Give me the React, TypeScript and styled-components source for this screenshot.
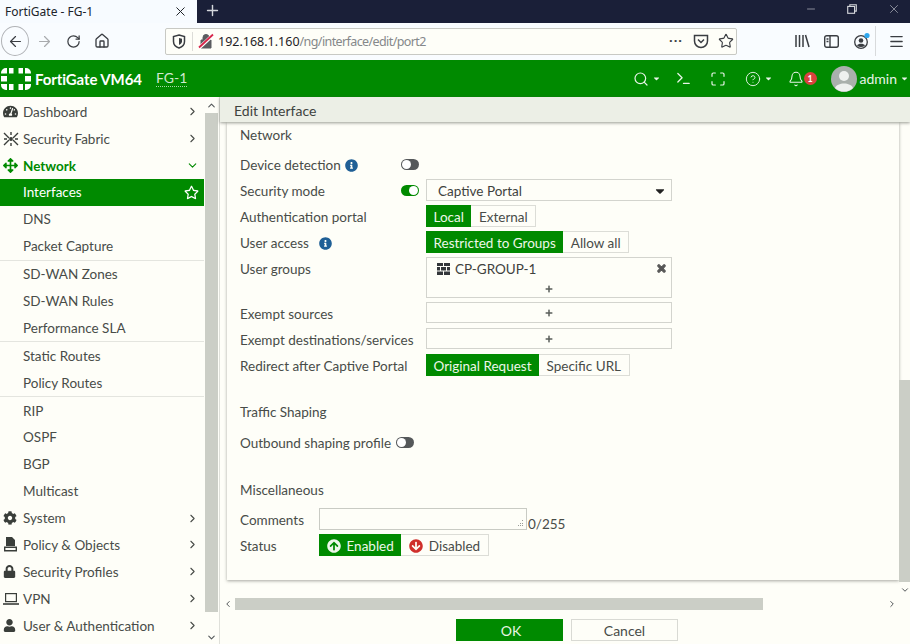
import React from 'react';
import styled, { createGlobalStyle } from 'styled-components';
import { ArrowLeft, ArrowRight, RotateCw, Home, Star, Search, Maximize, CircleHelp, Bell, X, Plus, Minus, Menu, ChevronRight, ChevronDown, ChevronUp, ChevronLeft, Terminal } from 'lucide-react';
import { FaTachometerAlt, FaArrowsAlt, FaCog, FaLock, FaUser, FaInfoCircle, FaArrowCircleUp, FaArrowCircleDown, FaTimes, FaPlus, FaCaretDown, FaRegStar } from 'react-icons/fa';

const GREEN = '#008a00';
const TEXT = '#484c48';
const PAPER = '#fefef8';
const THUMB = '#cbcec6';

const Global = createGlobalStyle`
  html, body { margin: 0; padding: 0; background: ${PAPER}; }
  body { font-family: Lato, "Liberation Sans", sans-serif; font-size: 13.5px; color: ${TEXT}; }
  * { box-sizing: border-box; }
`;

const Page = styled.div`
  width: 910px;
  height: 644px;
  overflow: hidden;
  display: flex;
  flex-direction: column;
`;

/* browser chrome */
const TabStrip = styled.div`
  height: 23px;
  background: #1a1f38;
  display: flex;
  align-items: stretch;
  flex: none;
`;
const Tab = styled.div`
  width: 197px;
  background: #f7fbff;
  display: flex;
  align-items: center;
  justify-content: space-between;
  padding: 0 9px 0 5px;
  font: 12px "Noto Sans", "Liberation Sans", sans-serif;
  color: #20242a;
`;
const NewTab = styled.div`
  width: 30px;
  display: flex;
  align-items: center;
  justify-content: center;
  color: #d5d7dc;
  margin-top: -3px;
`;
const WindowButtons = styled.div`
  margin-left: auto;
  display: flex;
  align-items: center;
  gap: 29px;
  padding: 0 9px 5px 0;
  color: #d5d7dc;
`;
const RestoreIcon = styled.svg`
  width: 12px;
  height: 12px;
`;
const Toolbar = styled.div`
  height: 37px;
  flex: none;
  background: #f9fcff;
  display: flex;
  align-items: center;
  color: #3a3d42;
  padding-bottom: 1px;
`;
const BackRound = styled.div`
  width: 28px;
  height: 30px;
  margin-left: 1px;
  border: 1px solid #b0b2b6;
  border-radius: 50%;
  display: flex;
  align-items: center;
  justify-content: center;
`;
const NavIcons = styled.div`
  display: flex;
  align-items: center;
  gap: 13px;
  margin-left: 7px;
  width: 129px;
`;
const UrlBar = styled.div`
  width: 572px;
  height: 27px;
  background: ${PAPER};
  border: 1px solid #c8c9c4;
  border-radius: 2px;
  display: flex;
  align-items: center;
  padding: 0 2px 0 6px;
  font: 12.5px "Noto Sans", "Liberation Sans", sans-serif;
`;
const UrlDivider = styled.span`
  width: 1px;
  height: 19px;
  background: #dcdcd8;
  margin: 0 5px 0 6px;
`;
const UrlHost = styled.span`
  color: #1f2226;
  margin-left: 4px;
`;
const UrlPath = styled.span`
  color: #85888a;
  letter-spacing: -0.6px;
`;
const UrlRight = styled.div`
  margin-left: auto;
  display: flex;
  align-items: center;
  gap: 9px;
  padding-right: 0;
`;
const Dots = styled.span`
  font-weight: 700;
  letter-spacing: 1px;
  font-size: 13px;
  line-height: 13px;
  margin-top: -8px;
  margin-right: 1px;
`;
const ToolRight = styled.div`
  margin-left: auto;
  display: flex;
  align-items: center;
  gap: 14px;
  padding-right: 5px;
`;
const ToolDivider = styled.span`
  width: 1px;
  height: 30px;
  background: #d8dadc;
  margin: 0 -2px 0 -10px;
`;

/* green app header */
const Header = styled.header`
  height: 37px;
  flex: none;
  background: ${GREEN};
  color: #fff;
  display: flex;
  align-items: center;
  padding: 0 1px 0 1px;
`;
const Brand = styled.span`
  font-weight: 700;
  font-size: 15px;
  margin-left: 4px;
  letter-spacing: -0.1px;
`;
const Host = styled.span`
  margin-left: 14px;
  font-size: 14px;
  color: #cfe8cf;
  border-bottom: 1px dotted #a8d8a8;
  line-height: 16px;
`;
const HeadRight = styled.div`
  margin-left: auto;
  display: flex;
  align-items: center;
  color: #e8f4e8;
`;
const Caret = styled(FaCaretDown)`
  width: 9px;
  height: 9px;
`;
const HeadItem = styled.span<{ $left: number }>`
  display: flex;
  align-items: center;
  margin-left: ${p => p.$left}px;
  gap: 3px;
`;
const Badge = styled.span`
  width: 13px;
  height: 13px;
  border-radius: 50%;
  background: #d9423f;
  color: #fff;
  font-size: 9px;
  font-weight: 700;
  display: flex;
  align-items: center;
  justify-content: center;
  margin-left: -3px;
`;
const Avatar = styled.svg`
  width: 26px;
  height: 26px;
`;
const AdminName = styled.span`
  font-size: 14px;
  color: #e8f4e8;
`;

/* body */
const Body = styled.div`
  flex: 1;
  min-height: 0;
  display: flex;
`;
const Side = styled.nav`
  width: 204px;
  flex: none;
  padding-top: 1.3px;
  overflow: hidden;
`;
const NavRow = styled.div<{ $active?: boolean; $current?: boolean }>`
  height: 26.9px;
  display: flex;
  align-items: center;
  padding-right: 5px;
  background: ${p => (p.$active ? GREEN : 'transparent')};
  color: ${p => (p.$active ? '#fff' : p.$current ? GREEN : TEXT)};
  font-weight: ${p => (p.$current ? 700 : 400)};
`;
const NavIcon = styled.span`
  width: 23px;
  padding-left: 3px;
  display: flex;
  align-items: center;
  flex: none;
`;
const NavEnd = styled.span`
  margin-left: auto;
  display: flex;
  align-items: center;
`;
const NavRule = styled.div`
  height: 1px;
  background: #e4e5df;
`;
const VBar = styled.div<{ $w: number }>`
  width: ${p => p.$w}px;
  flex: none;
  display: flex;
  flex-direction: column;
  align-items: center;
  color: #54585a;
`;
const ArrowSlot = styled.div<{ $h: number }>`
  height: ${p => p.$h}px;
  display: flex;
  align-items: center;
  justify-content: center;
  flex: none;
`;
const Thumb = styled.div<{ $h: number; $top?: number }>`
  height: ${p => p.$h}px;
  width: 100%;
  background: ${THUMB};
  margin-top: ${p => p.$top ?? 0}px;
  flex: none;
`;
const SideBarWrap = styled(VBar)`
  padding: 0 1px;
  border-right: 1px solid #dfe0da;
`;
const Main = styled.main`
  flex: 1;
  min-width: 0;
  display: flex;
  flex-direction: column;
`;
const TitleBar = styled.div`
  height: 25px;
  flex: none;
  background: #ecefe6;
  box-shadow: 0 1px 3px rgba(70, 72, 64, 0.55);
  padding: 5px 0 0 14px;
  font-size: 14px;
  color: #3e423e;
  position: relative;
`;
const Middle = styled.div`
  height: 476px;
  flex: none;
  display: flex;
`;
const CardSlot = styled.div`
  flex: 1;
  padding-left: 7px;
  min-width: 0;
`;
const Card = styled.div`
  height: 458px;
  background: ${PAPER};
  box-shadow: 0 1px 3px rgba(80, 82, 74, 0.5);
  padding-left: 13px;
  padding-top: 4px;
`;
const Heading = styled.div<{ $top?: number }>`
  height: 18px;
  line-height: 18px;
  margin-top: ${p => p.$top ?? 0}px;
`;
const FormRow = styled.div<{ $h?: number; $top?: number }>`
  display: flex;
  align-items: flex-start;
  height: ${p => p.$h ?? 26}px;
  margin-top: ${p => p.$top ?? 0}px;
`;
const Label = styled.div<{ $w?: number }>`
  width: ${p => (p.$w ? `${p.$w}px` : 'auto')};
  flex: none;
  display: flex;
  align-items: center;
  gap: 4px;
  height: 22px;
  padding-top: 2px;
  white-space: nowrap;
`;
const Info = styled(FaInfoCircle)`
  color: #1f5f96;
  width: 13px;
  height: 13px;
  flex: none;
`;
const Toggle = styled.span<{ $on?: boolean }>`
  width: 18px;
  height: 11px;
  border-radius: 6px;
  background: ${p => (p.$on ? GREEN : '#55585a')};
  display: inline-flex;
  align-items: center;
  justify-content: ${p => (p.$on ? 'flex-end' : 'flex-start')};
  padding: 0 1px;
  flex: none;
`;
const Knob = styled.span`
  width: 9px;
  height: 9px;
  border-radius: 50%;
  background: #fff;
`;
const ToggleCell = styled.div<{ $left?: number }>`
  width: ${p => (p.$left ? 'auto' : '25px')};
  margin-left: ${p => p.$left ?? 0}px;
  height: 22px;
  display: flex;
  align-items: center;
  flex: none;
`;
const Select = styled.div`
  width: 246px;
  height: 22px;
  border: 1px solid #d3d4ce;
  background: ${PAPER};
  display: flex;
  align-items: center;
  justify-content: space-between;
  padding: 1px 4px 0 11px;
  color: #3e423e;
`;
const Segments = styled.div`
  display: inline-flex;
  height: 22px;
  border: 1px solid #dcddd7;
`;
const Segment = styled.span<{ $on?: boolean }>`
  display: flex;
  align-items: center;
  gap: 6px;
  padding: 1px 7.5px 0;
  margin: ${p => (p.$on ? '-1px 0 -1px -1px' : 0)};
  background: ${p => (p.$on ? GREEN : PAPER)};
  color: ${p => (p.$on ? '#eef7ea' : TEXT)};
`;
const AddBox = styled.div<{ $h?: number }>`
  width: 246px;
  height: ${p => p.$h ?? 21}px;
  border: 1px solid #d3d4ce;
  display: flex;
  flex-direction: column;
  align-items: center;
  justify-content: center;
  color: #5a5e5a;
`;
const GroupEntry = styled.div`
  width: 100%;
  display: flex;
  align-items: center;
  height: 20px;
  padding: 0 4px 0 10px;
  color: #3e423e;
  gap: 5px;
`;
const BrickIcon = styled.svg`
  width: 13px;
  height: 12px;
  flex: none;
`;
const Remove = styled(FaTimes)`
  margin-left: auto;
  width: 11px;
  height: 11px;
  color: #555;
  stroke: currentColor;
  stroke-width: 50;
`;
const PlusSmall = styled(FaPlus)`
  width: 8px;
  height: 8px;
`;
const GroupPlus = styled.div`
  height: 15px;
  display: flex;
  align-items: center;
  justify-content: center;
  margin-top: 3px;
`;
const Comment = styled.div`
  width: 208px;
  height: 22px;
  border: 1px solid #c9cbc4;
  display: flex;
  align-items: flex-end;
  justify-content: flex-end;
  padding: 0 2px 2px 0;
`;
const Grip = styled.svg`
  width: 7px;
  height: 7px;
`;
const Counter = styled.span`
  margin: 8px 0 0 1px;
`;
const HBarRow = styled.div`
  height: 12px;
  margin-top: 0;
  flex: none;
  display: flex;
  align-items: center;
  color: #54585a;
`;
const HArrow = styled.div`
  width: 15px;
  display: flex;
  justify-content: center;
  flex: none;
`;
const HThumb = styled.div`
  width: 528px;
  height: 12px;
  background: ${THUMB};
`;
const HEnd = styled(HArrow)`
  margin-left: 121px;
`;
const Footer = styled.div`
  flex: none;
  display: flex;
  gap: 8px;
  padding: 9px 0 0 236px;
`;
const Primary = styled.div`
  width: 107px;
  height: 22px;
  background: ${GREEN};
  color: #e9f5e5;
  font-size: 14px;
  padding-left: 3px;
  display: flex;
  align-items: center;
  justify-content: center;
`;
const Secondary = styled(Primary)`
  background: ${PAPER};
  color: ${TEXT};
  border: 1px solid #d9dad4;
  padding-left: 0;
`;

/* inline drawings */
const FortiLogo = () => (
  <svg width="30" height="22" viewBox="0 0 30 22" fill="#fff">
    <path d="M8 0h4.500v5.500H8zM17.500 0H22v5.500h-4.500zM24 0h1a5 5 0 0 1 5 5v.5h-6zM6 0v5.500H0V5a5 5 0 0 1 5-5z" />
    <path d="M0 8h6v5.500H0zM24 8h6v5.500h-6z" />
    <path d="M0 16h6v6H5a5 5 0 0 1-5-5zM8 16h4.500v6H8zM17.500 16H22v6h-4.500zM24 16h6v1a5 5 0 0 1-5 5h-1z" />
  </svg>
);
const FabricIcon = () => (
  <svg width="16" height="16" viewBox="0 0 16 16" fill="none" stroke="#3a3e3a" strokeWidth="1.4">
    <path d="M1 2l5 5M15 2l-5 5M1 14l5-5M15 14l-5-5M8 1v3M8 12v3M1 8h3M12 8h3" />
    <circle cx="8" cy="8" r="1.2" fill="#3a3e3a" />
  </svg>
);
const PolicyIcon = () => (
  <svg width="15" height="15" viewBox="0 0 15 15" fill="#3a3e3a">
    <path d="M3 0h6l3 3v6H3zM1 9.500h13v5H1zM2.400 11v2h10.200v-2z" fillRule="evenodd" />
  </svg>
);
const LaptopIcon = () => (
  <svg width="16" height="14" viewBox="0 0 16 14" fill="none" stroke="#3a3e3a" strokeWidth="1.2">
    <rect x="2.600" y="1.600" width="10.800" height="8" />
    <path d="M0 12h16" strokeWidth="1.600" />
  </svg>
);
const PocketIcon = () => (
  <svg width="16" height="16" viewBox="0 0 16 16" fill="none" stroke="#3a3d42" strokeWidth="1.5">
    <path d="M1.500 2.500h13v5.500a6.500 6.500 0 0 1-13 0z" />
    <path d="M5 6.500l3 3 3-3" />
  </svg>
);
const ShieldIcon = () => (
  <svg width="14" height="15" viewBox="0 0 14 15" fill="none" stroke="#3a3d42" strokeWidth="1.5">
    <path d="M7 1l5.500 1.500v5c0 3-2.500 5.500-5.500 6.500-3-1-5.500-3.500-5.500-6.500v-5z" />
    <path d="M7 4l3 .8v2.700c0 1.500-1.300 2.800-3 3.500z" fill="#3a3d42" stroke="none" />
  </svg>
);
const InsecureIcon = () => (
  <svg width="16" height="16" viewBox="0 0 16 16">
    <path d="M3 7h10v8H3zM5 7V4.500a3 3 0 0 1 6 0V7" fill="#5a5c60" stroke="#5a5c60" strokeWidth="1" />
    <path d="M1 15L15 2" stroke="#fff" strokeWidth="3.500" />
    <path d="M1 14.500L15 1.500" stroke="#d7264a" strokeWidth="1.800" />
  </svg>
);
const LibraryIcon = () => (
  <svg width="15" height="14" viewBox="0 0 15 14" fill="none" stroke="#3a3d42" strokeWidth="1.500">
    <path d="M1 1v12M4.500 1v12M8 1v12M10.500 1l3.500 12" />
  </svg>
);
const SidebarIcon = () => (
  <svg width="15" height="13" viewBox="0 0 15 13" fill="none" stroke="#3a3d42" strokeWidth="1.400">
    <rect x="0.700" y="0.700" width="13.600" height="11.600" rx="2" />
    <path d="M6 1v11M2.500 4h2M2.500 6.500h2" />
  </svg>
);
const AccountIcon = () => (
  <svg width="18" height="18" viewBox="0 0 18 18">
    <circle cx="8" cy="10" r="6.300" fill="none" stroke="#3a3d42" strokeWidth="1.300" />
    <circle cx="8" cy="8.500" r="2.300" fill="#3a3d42" />
    <path d="M4 13.500c1-2.500 7-2.500 8 0a6 6 0 0 1-8 0z" fill="#3a3d42" />
    <circle cx="14" cy="3.500" r="2.600" fill="#2fa8f0" />
  </svg>
);

type Item = { label: string; icon?: React.ReactNode; end?: 'right' | 'down' | 'star'; active?: boolean; current?: boolean; rule?: boolean };

const dark = { color: '#3a3e3a' };
const nav: Item[] = [
  { label: 'Dashboard', icon: <FaTachometerAlt size={15} style={dark} />, end: 'right' },
  { label: 'Security Fabric', icon: <FabricIcon />, end: 'right' },
  { label: 'Network', icon: <FaArrowsAlt size={15} />, end: 'down', current: true },
  { label: 'Interfaces', end: 'star', active: true },
  { label: 'DNS' },
  { label: 'Packet Capture', rule: true },
  { label: 'SD-WAN Zones' },
  { label: 'SD-WAN Rules' },
  { label: 'Performance SLA', rule: true },
  { label: 'Static Routes' },
  { label: 'Policy Routes', rule: true },
  { label: 'RIP' },
  { label: 'OSPF' },
  { label: 'BGP' },
  { label: 'Multicast' },
  { label: 'System', icon: <FaCog size={14} style={dark} />, end: 'right' },
  { label: 'Policy & Objects', icon: <PolicyIcon />, end: 'right' },
  { label: 'Security Profiles', icon: <FaLock size={13} style={dark} />, end: 'right' },
  { label: 'VPN', icon: <LaptopIcon />, end: 'right' },
  { label: 'User & Authentication', icon: <FaUser size={13} style={dark} />, end: 'right' },
];

function NavEntry({ item }: { item: Item }) {
  return (
    <>
      <NavRow $active={item.active} $current={item.current}>
        <NavIcon>{item.icon}</NavIcon>
        {item.label}
        <NavEnd>
          {item.end === 'right' && <ChevronRight size={13} strokeWidth={2} />}
          {item.end === 'down' && <ChevronDown size={13} strokeWidth={2} />}
          {item.end === 'star' && <FaRegStar size={15} />}
        </NavEnd>
      </NavRow>
      {item.rule && <NavRule />}
    </>
  );
}

export default function App() {
  return (
    <Page>
      <Global />
      <TabStrip>
        <Tab>
          FortiGate - FG-1
          <X size={15} strokeWidth={1.6} />
        </Tab>
        <NewTab><Plus size={17} strokeWidth={2} /></NewTab>
        <WindowButtons>
          <Minus size={12} strokeWidth={1.2} />
          <RestoreIcon viewBox="0 0 14 14" fill="none" stroke="currentColor" strokeWidth="1.300">
            <rect x="2" y="4" width="8" height="8" />
            <path d="M4.500 4V2h7.500v7.500h-2" />
          </RestoreIcon>
          <X size={14} strokeWidth={1} />
        </WindowButtons>
      </TabStrip>

      <Toolbar>
        <BackRound><ArrowLeft size={17} strokeWidth={1.7} /></BackRound>
        <NavIcons>
          <ArrowRight size={17} strokeWidth={1.7} color="#a9abae" />
          <RotateCw size={15} strokeWidth={2} />
          <Home size={16} strokeWidth={2} />
        </NavIcons>
        <UrlBar>
          <ShieldIcon />
          <UrlDivider />
          <InsecureIcon />
          <UrlHost>192.168.1.160</UrlHost>
          <UrlPath>/ng/interface/edit/port2</UrlPath>
          <UrlRight>
            <Dots>...</Dots>
            <PocketIcon />
            <Star size={16} strokeWidth={1.7} />
          </UrlRight>
        </UrlBar>
        <ToolRight>
          <LibraryIcon />
          <SidebarIcon />
          <AccountIcon />
          <ToolDivider />
          <Menu size={17} strokeWidth={1.8} />
        </ToolRight>
      </Toolbar>

      <Header>
        <FortiLogo />
        <Brand>FortiGate VM64</Brand>
        <Host>FG-1</Host>
        <HeadRight>
          <HeadItem $left={0}><Search size={16} strokeWidth={1.8} /><Caret /></HeadItem>
          <HeadItem $left={14}><Terminal size={17} strokeWidth={1.8} /></HeadItem>
          <HeadItem $left={18}><Maximize size={16} strokeWidth={1.8} /></HeadItem>
          <HeadItem $left={19}><CircleHelp size={16} strokeWidth={1.4} /><Caret /></HeadItem>
          <HeadItem $left={15}><Bell size={16} strokeWidth={1.6} /><Badge>1</Badge></HeadItem>
          <HeadItem $left={14}>
            <Avatar viewBox="0 0 26 26">
              <circle cx="13" cy="13" r="13" fill="#a9b0ac" />
              <circle cx="13" cy="10" r="5" fill="#eef1ef" />
              <path d="M4 22c2-6 16-6 18 0a13 13 0 0 1-18 0z" fill="#eef1ef" />
            </Avatar>
            <AdminName>admin</AdminName>
            <Caret />
          </HeadItem>
        </HeadRight>
      </Header>

      <Body>
        <Side>
          {nav.map(item => <NavEntry key={item.label} item={item} />)}
        </Side>
        <SideBarWrap $w={16}>
          <ArrowSlot $h={16}><ChevronUp size={11} strokeWidth={2.4} /></ArrowSlot>
          <Thumb $h={499} />
          <ArrowSlot $h={32}><ChevronDown size={11} strokeWidth={2.4} style={{ marginTop: 18 }} /></ArrowSlot>
        </SideBarWrap>
        <Main>
          <TitleBar>Edit Interface</TitleBar>
          <Middle>
            <CardSlot>
              <Card>
                <Heading>Network</Heading>
                <FormRow $top={9}>
                  <Label $w={161}>Device detection <Info /></Label>
                  <ToggleCell><Toggle><Knob /></Toggle></ToggleCell>
                </FormRow>
                <FormRow>
                  <Label $w={161}>Security mode</Label>
                  <ToggleCell><Toggle $on><Knob /></Toggle></ToggleCell>
                  <Select>Captive Portal <FaCaretDown size={14} color="#222" /></Select>
                </FormRow>
                <FormRow>
                  <Label $w={186}>Authentication portal</Label>
                  <Segments>
                    <Segment $on>Local</Segment>
                    <Segment>External</Segment>
                  </Segments>
                </FormRow>
                <FormRow>
                  <Label $w={186}>User access <Info style={{ marginLeft: 6 }} /></Label>
                  <Segments>
                    <Segment $on>Restricted to Groups</Segment>
                    <Segment>Allow all</Segment>
                  </Segments>
                </FormRow>
                <FormRow $h={45}>
                  <Label $w={186}>User groups</Label>
                  <AddBox $h={41}>
                    <GroupEntry>
                      <BrickIcon viewBox="0 0 13 12" fill="#33363a">
                        <path d="M0 0h6v3H0zM7 0h6v3H7zM0 4h3v3.500H0zM4 4h5v3.500H4zM10 4h3v3.500h-3zM0 8.500h6V12H0zM7 8.500h6V12H7z" />
                      </BrickIcon>
                      CP-GROUP-1
                      <Remove />
                    </GroupEntry>
                    <GroupPlus><PlusSmall /></GroupPlus>
                  </AddBox>
                </FormRow>
                <FormRow>
                  <Label $w={186}>Exempt sources</Label>
                  <AddBox><PlusSmall /></AddBox>
                </FormRow>
                <FormRow>
                  <Label $w={186}>Exempt destinations/services</Label>
                  <AddBox><PlusSmall /></AddBox>
                </FormRow>
                <FormRow>
                  <Label $w={186}>Redirect after Captive Portal</Label>
                  <Segments>
                    <Segment $on>Original Request</Segment>
                    <Segment>Specific URL</Segment>
                  </Segments>
                </FormRow>
                <Heading $top={23}>Traffic Shaping</Heading>
                <FormRow $top={10}>
                  <Label>Outbound shaping profile</Label>
                  <ToggleCell $left={5}><Toggle><Knob /></Toggle></ToggleCell>
                </FormRow>
                <Heading $top={24}>Miscellaneous</Heading>
                <FormRow $top={9}>
                  <Label $w={79}>Comments</Label>
                  <Comment>
                    <Grip viewBox="0 0 7 7" fill="#9a9c98">
                      <path d="M5 0h1v1H5zM3 3h1v1H3zM5 3h1v1H5zM1 5h1v1H1zM3 5h1v1H3zM5 5h1v1H5z" />
                    </Grip>
                  </Comment>
                  <Counter>0/255</Counter>
                </FormRow>
                <FormRow>
                  <Label $w={79}>Status</Label>
                  <Segments>
                    <Segment $on><FaArrowCircleUp size={14} />Enabled</Segment>
                    <Segment><FaArrowCircleDown size={14} color="#cf2f2b" />Disabled</Segment>
                  </Segments>
                </FormRow>
              </Card>
            </CardSlot>
            <VBar $w={11}>
              <ArrowSlot $h={258} />
              <Thumb $h={202} />
              <ArrowSlot $h={16}><ChevronDown size={10} strokeWidth={2.4} /></ArrowSlot>
            </VBar>
          </Middle>
          <HBarRow>
            <HArrow><ChevronLeft size={10} strokeWidth={2.4} /></HArrow>
            <HThumb />
            <HEnd><ChevronRight size={10} strokeWidth={2.4} /></HEnd>
          </HBarRow>
          <Footer>
            <Primary>OK</Primary>
            <Secondary>Cancel</Secondary>
          </Footer>
        </Main>
      </Body>
    </Page>
  );
}
